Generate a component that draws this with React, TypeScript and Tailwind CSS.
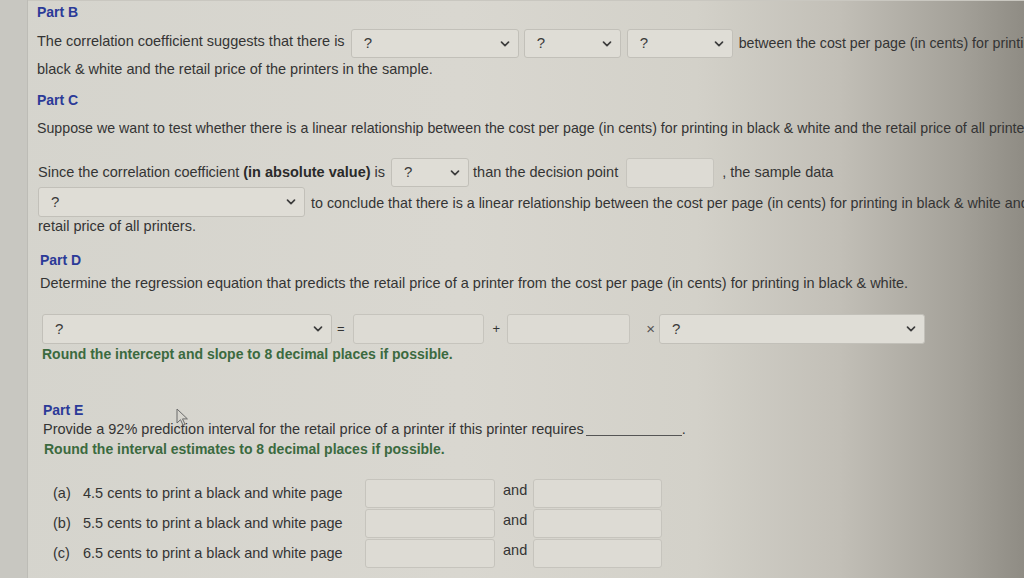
import React from 'react';

// ─── Small building blocks ─────────────────────
function Chevron() {
  return (
    <svg className="h-[8px] w-[10px] text-[#3d3d3d]" viewBox="0 0 10 8" fill="none" stroke="currentColor" strokeWidth={1.7} strokeLinecap="round" strokeLinejoin="round">
      <path d="M1.5 2.2L5 5.6l3.5-3.4" />
    </svg>
  );
}

function Select({ width, height = 29, label = '?' }: { width: number; height?: number; label?: string }) {
  return (
    <div
      className="flex shrink-0 items-center justify-between rounded-[3px] border border-[#c2c0b9] bg-[#dfddd6] pl-[12px] pr-[8px]"
      style={{ width, height }}
    >
      <span className="text-[15px] text-[#3a3a3a]">{label}</span>
      <Chevron />
    </div>
  );
}

function Field({ width, height = 30 }: { width: number; height?: number }) {
  return (
    <div
      className="shrink-0 rounded-[3px] border border-[#c6c4bd] bg-[#dddbd4]"
      style={{ width, height }}
    />
  );
}

function Heading({ children }: { children: React.ReactNode }) {
  return <div className="h-[17px] text-[14px] font-bold leading-[17px] text-[#2b3a98]">{children}</div>;
}

function Hint({ children }: { children: React.ReactNode }) {
  return <div className="h-[17px] text-[14px] font-bold leading-[17px] text-[#3b6a3f]">{children}</div>;
}

function Line({ children, className = '' }: { children: React.ReactNode; className?: string }) {
  return <div className={`h-[17px] leading-[17px] ${className}`}>{children}</div>;
}

const rows = [
  { tag: '(a)', cents: '4.5' },
  { tag: '(b)', cents: '5.5' },
  { tag: '(c)', cents: '6.5' },
];

export default function App() {
  return (
    <div className="relative flex h-[578px] w-[1024px] overflow-hidden whitespace-nowrap bg-[linear-gradient(to_right,#d5d4cd_0%,#d9d7d0_45%,#d3d1c9_68%,#c2bfb7_82%,#a3a098_94%,#8f8c84_100%)] font-['Liberation_Sans',Arial,sans-serif] text-[14.5px] text-[#343434]">
      {/* left gutter */}
      <div className="w-[28px] shrink-0 border-r border-[#bdbcb6] bg-[#c8c7c1]" />

      <div className="min-w-0 flex-1 border-t border-[#c9c7c0] pl-[9px] pt-[3px]">
        {/* ─── Part B ─── */}
        <Heading>Part B</Heading>
        <div className="mt-[8px] flex h-[29px] items-center">
          <span className="pb-[3px]">The correlation coefficient suggests that there is</span>
          <div className="ml-[6px]"><Select width={168} /></div>
          <div className="ml-[5px]"><Select width={97} /></div>
          <div className="ml-[6px]"><Select width={106} /></div>
          <span className="ml-[6px] text-[14.2px]">between the cost per page (in cents) for printing in</span>
        </div>
        <Line className="mt-[3px]">black &amp; white and the retail price of the printers in the sample.</Line>

        {/* ─── Part C ─── */}
        <div className="mt-[14px]"><Heading>Part C</Heading></div>
        <Line className="mt-[11px] text-[14.2px]">
          Suppose we want to test whether there is a linear relationship between the cost per page (in cents) for printing in black &amp; white and the retail price of all printers.
        </Line>
        <div className="mt-[21px] flex h-[29px] items-center pl-[1px]">
          <span>
            Since the correlation coefficient <b className="text-[#2a2a2a]">(in absolute value)</b> is
          </span>
          <div className="ml-[6px]"><Select width={78} /></div>
          <span className="ml-[4px]">than the decision point</span>
          <div className="ml-[8px]"><Field width={88} /></div>
          <span className="ml-[8px]">, the sample data</span>
        </div>
        <div className="flex h-[30px] items-center pl-[1px]">
          <Select width={267} height={30} />
          <span className="ml-[6px] pt-[4px] text-[14.3px]">
            to conclude that there is a linear relationship between the cost per page (in cents) for printing in black &amp; white and the
          </span>
        </div>
        <Line className="pl-[1px] pt-[1px]">retail price of all printers.</Line>

        {/* ─── Part D ─── */}
        <div className="mt-[18px] pl-[3px]">
          <Heading>Part D</Heading>
          <Line className="mt-[6px]">
            Determine the regression equation that predicts the retail price of a printer from the cost per page (in cents) for printing in black &amp; white.
          </Line>
          <div className="mt-[22px] flex h-[30px] items-center pl-[2px]">
            <Select width={290} height={30} />
            <span className="ml-[5px] text-[13px]">=</span>
            <div className="ml-[8px]"><Field width={131} /></div>
            <span className="ml-[9px] text-[13px]">+</span>
            <div className="ml-[7px]"><Field width={123} /></div>
            <span className="ml-[16px] text-[15px] text-[#555]">×</span>
            <div className="ml-[4px]"><Select width={266} height={30} /></div>
          </div>
          <div className="mt-[2px] pl-[2px]"><Hint>Round the intercept and slope to 8 decimal places if possible.</Hint></div>
        </div>

        {/* ─── Part E ─── */}
        <div className="mt-[39px] pl-[6px]">
          <Heading>Part E</Heading>
          <Line className="mt-[2px]">
            Provide a 92% prediction interval for the retail price of a printer if this printer requires
            <span className="ml-[2px] inline-block w-[96px] border-b border-[#555] align-baseline leading-[12px]">&nbsp;</span>
            .
          </Line>
          <div className="mt-[3px] pl-[1px]"><Hint>Round the interval estimates to 8 decimal places if possible.</Hint></div>

          <div className="mt-[20px] flex flex-col pl-[10px]">
            {rows.map((r) => (
              <div key={r.tag} className="flex h-[30px] items-center">
                <div className="flex w-[312px] items-center pt-[2px]">
                  <span className="w-[30px]">{r.tag}</span>
                  <span>{r.cents} cents to print a black and white page</span>
                </div>
                <Field width={130} height={29} />
                <span className="ml-[8px] w-[30px] pb-[4px]">and</span>
                <Field width={129} height={29} />
              </div>
            ))}
          </div>
        </div>
      </div>

      {/* mouse pointer */}
      <svg className="absolute left-[176px] top-[408px] h-[18px] w-[13px]" viewBox="0 0 13 18" fill="none" stroke="#6b6b6b" strokeWidth={1}>
        <path d="M1 1v14l3.5-3.3 2.6 5.6 2-0.9-2.6-5.5h4.9z" />
      </svg>
    </div>
  );
}
